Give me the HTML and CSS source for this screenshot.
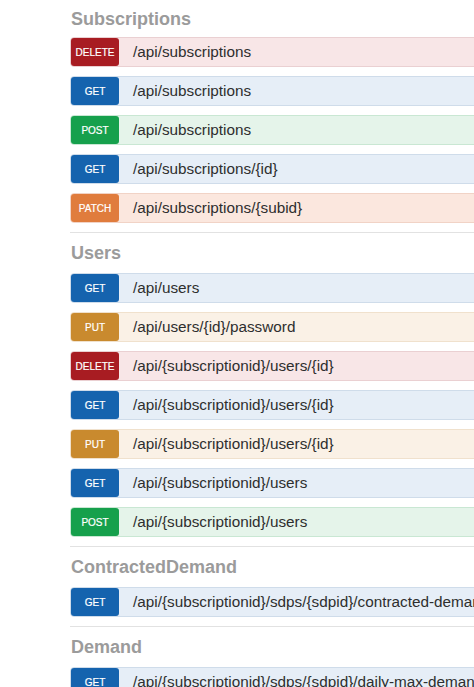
FILE: index.html
```html
<!DOCTYPE html>
<html lang="en">
<head>
<meta charset="utf-8">
<title>API</title>
<link rel="stylesheet" href="styles.css">
</head>
<body>
<div class="page">
  <section class="tag">
    <h3 class="tag-title">Subscriptions</h3>
    <div class="ops">
      <div class="op op-delete"><span class="method">DELETE</span><span class="path">/api/subscriptions</span></div>
      <div class="op op-get"><span class="method">GET</span><span class="path">/api/subscriptions</span></div>
      <div class="op op-post"><span class="method">POST</span><span class="path">/api/subscriptions</span></div>
      <div class="op op-get"><span class="method">GET</span><span class="path">/api/subscriptions/{id}</span></div>
      <div class="op op-patch"><span class="method">PATCH</span><span class="path">/api/subscriptions/{subid}</span></div>
    </div>
  </section>
  <section class="tag">
    <h3 class="tag-title">Users</h3>
    <div class="ops">
      <div class="op op-get"><span class="method">GET</span><span class="path">/api/users</span></div>
      <div class="op op-put"><span class="method">PUT</span><span class="path">/api/users/{id}/password</span></div>
      <div class="op op-delete"><span class="method">DELETE</span><span class="path">/api/{subscriptionid}/users/{id}</span></div>
      <div class="op op-get"><span class="method">GET</span><span class="path">/api/{subscriptionid}/users/{id}</span></div>
      <div class="op op-put"><span class="method">PUT</span><span class="path">/api/{subscriptionid}/users/{id}</span></div>
      <div class="op op-get"><span class="method">GET</span><span class="path">/api/{subscriptionid}/users</span></div>
      <div class="op op-post"><span class="method">POST</span><span class="path">/api/{subscriptionid}/users</span></div>
    </div>
  </section>
  <section class="tag">
    <h3 class="tag-title">ContractedDemand</h3>
    <div class="ops">
      <div class="op op-get"><span class="method">GET</span><span class="path">/api/{subscriptionid}/sdps/{sdpid}/contracted-demand</span></div>
    </div>
  </section>
  <section class="tag">
    <h3 class="tag-title">Demand</h3>
    <div class="ops">
      <div class="op op-get"><span class="method">GET</span><span class="path">/api/{subscriptionid}/sdps/{sdpid}/daily-max-demand</span></div>
    </div>
  </section>
</div>
</body>
</html>
```
FILE: styles.css
```css
html, body {
  margin: 0;
  padding: 0;
  background: #ffffff;
  overflow: hidden;
}

body {
  font-family: "Liberation Sans", Arial, sans-serif;
  color: #303030;
}

.page {
  width: 640px;
  padding-left: 70px;
  margin-top: -4px;
}

.tag {
  border-top: 1px solid #e2e2e2;
  padding-top: 10px;
  padding-bottom: 9px;
}

.tag:first-child .tag-title {
  margin-top: 2px;
  margin-bottom: 8px;
}

.tag-title {
  margin: 0 0 10px 1px;
  font-size: 18px;
  line-height: 20px;
  font-weight: bold;
  color: #9b9b9b;
}

.ops {
  display: flex;
  flex-direction: column;
  gap: 9px;
}

.op {
  display: flex;
  align-items: center;
  height: 28px;
  border: 1px solid;
  border-radius: 4px;
}

.method {
  flex: none;
  width: 48px;
  height: 28px;
  border-radius: 3px;
  display: flex;
  align-items: center;
  justify-content: center;
  color: #ffffff;
  font-size: 10px;
  font-weight: normal;
  -webkit-text-stroke: 0.2px #ffffff;
}

.path {
  margin-left: 14px;
  font-size: 15.3px;
  white-space: nowrap;
  color: #2e2e2e;
}

.op-delete { background: #f8e6e7; border-color: #ead0d2; }
.op-delete .method { background: #a81c22; }

.op-get { background: #e6eef7; border-color: #cfdcea; }
.op-get .method { background: #1563ae; }

.op-post { background: #e5f4ea; border-color: #c9e7d3; }
.op-post .method { background: #16a04c; }

.op-patch { background: #fbe7de; border-color: #f1d3c6; }
.op-patch .method { background: #e07c3d; }

.op-put { background: #faf1e6; border-color: #f0e1cd; }
.op-put .method { background: #c98a2e; }
```
